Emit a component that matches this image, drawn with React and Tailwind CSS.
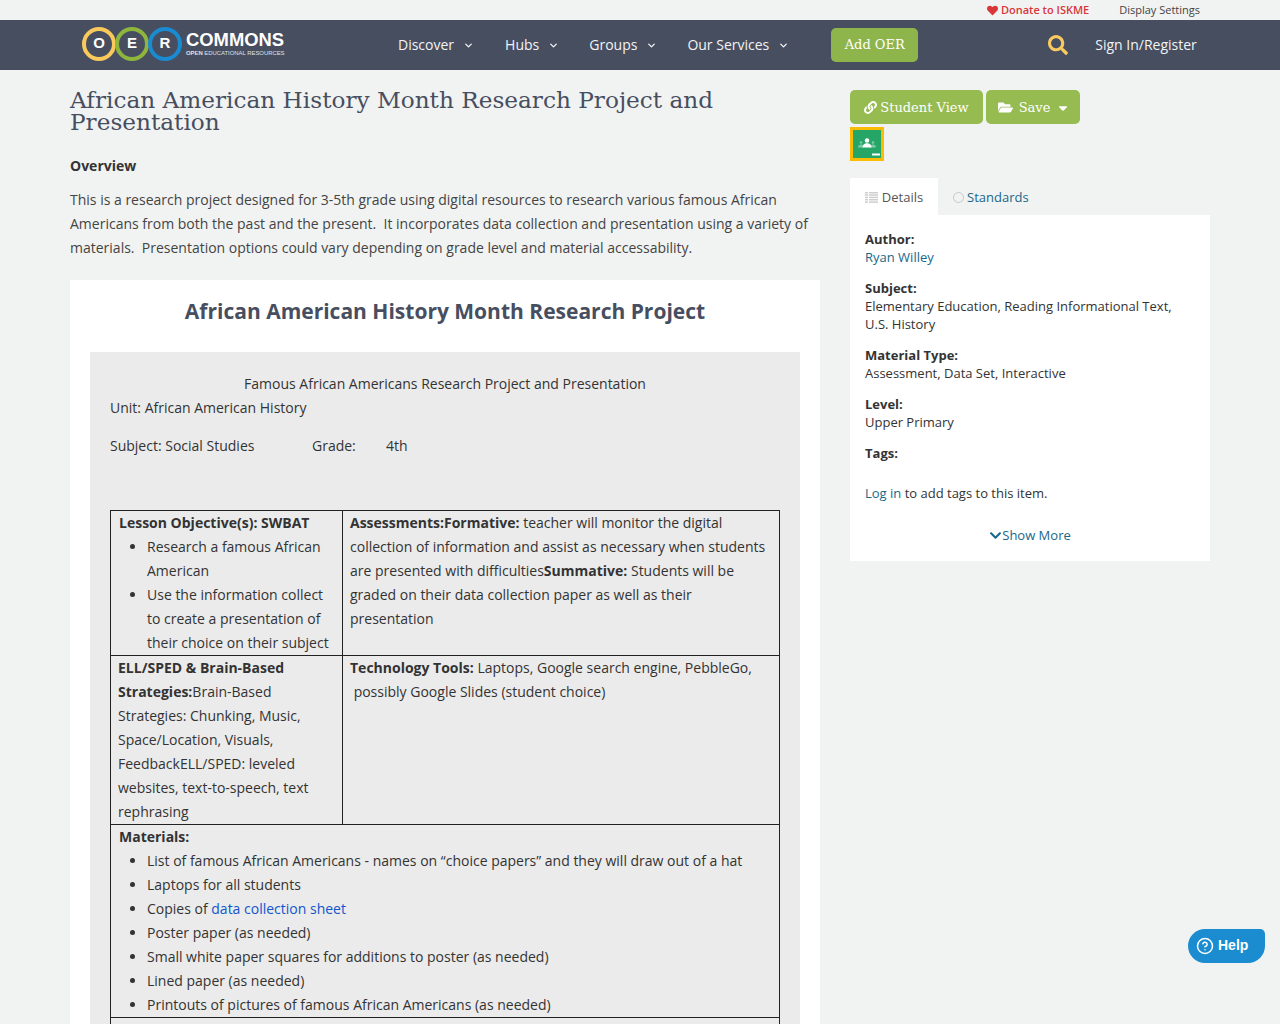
import { ChevronDown, CircleHelp } from 'lucide-react';
import { FaHeart, FaSearch, FaLink, FaFolderOpen, FaCaretDown, FaChevronDown } from 'react-icons/fa';

const slab = "[font-family:'DejaVu_Serif',serif]";

const LogoRing = ({ letter, color }) => (
  <div className={`w-[34px] h-[34px] rounded-full border-[4px] ${color} bg-[#474e60] flex items-center justify-center text-white text-[15px] font-bold -mr-[1px] [font-family:'Liberation_Sans',sans-serif]`}>
    {letter}
  </div>
);

const NavItem = ({ label }) => (
  <div className="flex items-center gap-[9px] pb-[2px] text-[14px] text-[#f2f3f4]">
    <span>{label}</span>
    <ChevronDown className="w-[11px] h-[11px] mt-[2px]" strokeWidth={3} />
  </div>
);

const Meta = ({ label, children }) => (
  <div className="mb-[13px] text-[13px] leading-[18px] text-[#333]">
    <div className="font-bold">{label}</div>
    <div>{children}</div>
  </div>
);

const App = () => {
  return (
    <div className="h-screen overflow-hidden antialiased bg-[#f1f3f2] text-[#333] [font-family:'Open_Sans',sans-serif]">
      {/* top strip */}
      <div className="h-5 flex justify-end items-center pr-[80px] text-[11px]">
        <a className="flex items-center gap-[3px] font-semibold text-[#d9363a] mr-[30px]">
          <FaHeart className="w-[11px] h-[11px]" /> Donate to ISKME
        </a>
        <a className="text-[#444]">Display Settings</a>
      </div>

      {/* nav */}
      <div className="h-[50px] bg-[#474e60] flex items-center">
        <div className="w-[328px] pl-[82px] pb-[3px] flex items-center shrink-0">
          <LogoRing letter="O" color="border-[#f9c95c]" />
          <LogoRing letter="E" color="border-[#8eb63e]" />
          <LogoRing letter="R" color="border-[#1a8bd0]" />
          <div className="ml-[5px] text-white [font-family:'Liberation_Sans',sans-serif]">
            <div className="text-[18.4px] leading-[17px] font-bold">COMMONS</div>
            <div className="mt-[1px] text-[5.9px] leading-[8px] text-[#dfe2e6] whitespace-nowrap"><b>OPEN</b> EDUCATIONAL RESOURCES</div>
          </div>
        </div>
        <div className="flex items-center ml-[70px]">
          <div className="mr-[31px]"><NavItem label="Discover" /></div>
          <div className="mr-[30px]"><NavItem label="Hubs" /></div>
          <div className="mr-[30px]"><NavItem label="Groups" /></div>
          <div className="mr-[42px]"><NavItem label="Our Services" /></div>
          <button className={`w-[87px] h-[34px] rounded-[5px] bg-[#8eb44c] text-white text-[13px] ${slab}`}>Add OER</button>
        </div>
        <FaSearch className="ml-[130px] w-[20px] h-[20px] text-[#fac95f]" />
        <span className="ml-[27px] pb-[2px] text-[14px] text-[#f2f3f4]">Sign In/Register</span>
      </div>

      <div className="flex pl-[70px] gap-[30px] pt-5">
        {/* left column */}
        <div className="w-[750px] shrink-0">
          <h1 className={`text-[23.2px] leading-[22px] pb-[1px] -mt-[1px] text-[#474e60] ${slab}`}>
            African American History Month Research Project and Presentation
          </h1>
          <h3 className="mt-[22px] text-[14px] leading-[20px] font-bold">Overview</h3>
          <p className="mt-[12px] text-[14px] leading-[24px] text-[#444]">
            This is a research project designed for 3-5th grade using digital resources to research various famous African Americans from both the past and the present.&nbsp; It incorporates data collection and presentation using a variety of materials.&nbsp; Presentation options could vary depending on grade level and material accessability.
          </p>

          <div className="mt-[20px] bg-white px-5 pt-[16px]">
            <h2 className="text-[21px] leading-[30px] font-bold text-[#474e60] text-center">African American History Month Research Project</h2>
            <div className="mt-[26px] bg-[#ebebeb] px-5 pt-5 text-[14px] leading-[24px] text-[#333]">
              <div className="text-center">Famous African Americans Research Project and Presentation</div>
              <div>Unit: African American History</div>
              <div className="mt-[14px] flex">
                <span className="w-[202px]">Subject: Social Studies</span>
                <span className="w-[74px]">Grade:</span>
                <span>4th</span>
              </div>
              <table className="mt-[52px] w-[670px] table-fixed border-collapse border border-[#222]">
                <colgroup>
                  <col className="w-[232px]" />
                  <col />
                </colgroup>
                <tbody>
                  <tr className="h-[145px]">
                    <td className="border border-[#222] px-[7px] align-top">
                      <b className="pl-[1px]">Lesson Objective(s): SWBAT</b>
                      <ul className="list-disc pl-[29px]">
                        <li>Research a famous African American</li>
                        <li>Use the information collect to create a presentation of their choice on their subject</li>
                      </ul>
                    </td>
                    <td className="border border-[#222] px-[7px] align-top">
                      <b>Assessments:Formative:</b> teacher will monitor the digital collection of information and assist as necessary when students are presented with difficulties<b>Summative:</b> Students will be graded on their data collection paper as well as their presentation
                    </td>
                  </tr>
                  <tr className="h-[169px]">
                    <td className="border border-[#222] px-[7px] align-top">
                      <b>ELL/SPED &amp; Brain-Based Strategies:</b>Brain-Based Strategies: Chunking, Music, Space/Location, Visuals, FeedbackELL/SPED: leveled websites, text-to-speech, text rephrasing
                    </td>
                    <td className="border border-[#222] px-[7px] align-top">
                      <b>Technology Tools:</b> Laptops, Google search engine, PebbleGo,<br />&nbsp;possibly Google Slides (student choice)
                    </td>
                  </tr>
                  <tr className="h-[193px]">
                    <td colSpan={2} className="border border-[#222] px-[7px] align-top">
                      <b className="pl-[1px]">Materials:</b>
                      <ul className="list-disc pl-[29px]">
                        <li>List of famous African Americans - names on “choice papers” and they will draw out of a hat</li>
                        <li>Laptops for all students</li>
                        <li>Copies of <a className="text-[#1155cc]">data collection sheet</a></li>
                        <li>Poster paper (as needed)</li>
                        <li>Small white paper squares for additions to poster (as needed)</li>
                        <li>Lined paper (as needed)</li>
                        <li>Printouts of pictures of famous African Americans (as needed)</li>
                      </ul>
                    </td>
                  </tr>
                  <tr className="h-[60px]">
                    <td colSpan={2} className="border border-[#222]"></td>
                  </tr>
                </tbody>
              </table>
            </div>
          </div>
        </div>

        {/* right column */}
        <div className="w-[360px] shrink-0">
          <div className="flex gap-[3px]">
            <button className={`h-[34px] w-[133px] pt-[1px] rounded-[5px] bg-[#96bb50] text-white text-[13px] flex items-center justify-center gap-[3px] ${slab}`}>
              <FaLink className="w-[13px] h-[13px]" /> Student View
            </button>
            <button className={`h-[34px] w-[94px] pt-[1px] pl-[2px] rounded-[5px] bg-[#96bb50] text-white text-[13px] flex items-center justify-center gap-[6px] ${slab}`}>
              <FaFolderOpen className="w-[15px] h-[15px]" /> Save <FaCaretDown className="w-[14px] h-[14px]" />
            </button>
          </div>
          <div className="mt-[3px] w-[34px] h-[34px] border-[3px] border-[#fbbc05] bg-[#25a667] flex items-center justify-center">
            <svg viewBox="0 0 28 28" className="w-[28px] h-[28px]">
              <circle cx="8" cy="12.500" r="1.300" fill="#7fcaa5" />
              <circle cx="20" cy="12.500" r="1.300" fill="#7fcaa5" />
              <path d="M5 17.500c0-2 1.500-3 3-3s3 1 3 3zM17 17.500c0-2 1.500-3 3-3s3 1 3 3z" fill="#7fcaa5" />
              <circle cx="14" cy="10.500" r="2.200" fill="#fff" />
              <path d="M9.500 17.500c0-3 2.500-4.300 4.500-4.300s4.500 1.300 4.500 4.300z" fill="#fff" />
              <rect x="19" y="23.500" width="8" height="2" fill="#fff" />
            </svg>
          </div>
          <div className="mt-[17px] flex h-[37px] text-[13px]">
            <div className="w-[88px] pt-[2px] bg-white flex items-center justify-center gap-[4px] text-[#555]">
              <svg viewBox="0 0 13 11" className="w-[13px] h-[11px]" fill="#cfcfcf">
                <rect x="0" y="0" width="3" height="1.500" />
                <rect x="4" y="0" width="9" height="1.500" />
                <rect x="0" y="2.300" width="3" height="1.500" />
                <rect x="4" y="2.300" width="9" height="1.500" />
                <rect x="0" y="4.700" width="3" height="1.500" />
                <rect x="4" y="4.700" width="9" height="1.500" />
                <rect x="0" y="7" width="3" height="1.500" />
                <rect x="4" y="7" width="9" height="1.500" />
                <rect x="0" y="9.400" width="3" height="1.500" />
                <rect x="4" y="9.400" width="9" height="1.500" />
              </svg>
              Details
            </div>
            <div className="ml-[15px] pt-[2px] flex items-center gap-[3px] text-[#17688a]">
              <span className="w-[11px] h-[11px] rounded-full border border-[#c4c9c9]"></span> Standards
            </div>
          </div>
          <div className="bg-white px-[15px] pt-[15px] h-[346px]">
            <Meta label="Author:"><a className="text-[#17688a]">Ryan Willey</a></Meta>
            <Meta label="Subject:">Elementary Education, Reading Informational Text, U.S. History</Meta>
            <Meta label="Material Type:">Assessment, Data Set, Interactive</Meta>
            <Meta label="Level:">Upper Primary</Meta>
            <Meta label="Tags:"></Meta>
            <div className="mt-[22px] text-[13px] leading-[18px]"><a className="text-[#17688a]">Log in</a> to add tags to this item.</div>
            <div className="mt-[24px] flex items-center justify-center text-[13px] leading-[18px] text-[#17688a]">
              <FaChevronDown className="w-[13px] h-[13px]" />Show More
            </div>
          </div>
        </div>
      </div>

      {/* help widget */}
      <div className="fixed left-[1188px] top-[929px] w-[77px] h-[34px] pb-[2px] bg-[#1a8ccf] rounded-tl-[17px] rounded-bl-[17px] rounded-br-[17px] rounded-tr-[5px] flex items-center pl-[8px] gap-[4px] text-white text-[14px] font-bold [font-family:'Liberation_Sans',sans-serif]">
        <CircleHelp className="w-[18px] h-[18px] mt-[2px]" strokeWidth={2} /> Help
      </div>
    </div>
  );
};

export default App;
